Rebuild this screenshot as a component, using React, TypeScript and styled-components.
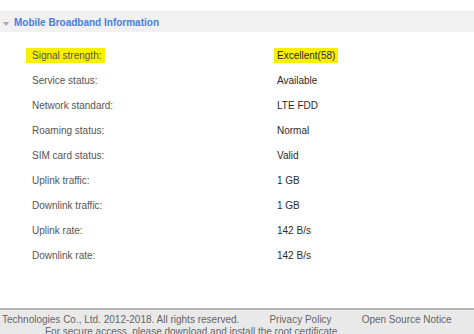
import React from 'react';
import styled, { createGlobalStyle } from 'styled-components';

const rows: [string, string][] = [
  ['Signal strength:', 'Excellent(58)'],
  ['Service status:', 'Available'],
  ['Network standard:', 'LTE FDD'],
  ['Roaming status:', 'Normal'],
  ['SIM card status:', 'Valid'],
  ['Uplink traffic:', '1 GB'],
  ['Downlink traffic:', '1 GB'],
  ['Uplink rate:', '142 B/s'],
  ['Downlink rate:', '142 B/s'],
];

export default function App() {
  return (
    <Page>
      <GlobalStyle />
      <Header>
        <Arrow />
        <Title>Mobile Broadband Information</Title>
      </Header>
      <InfoList>
        {rows.map(([label, value], i) => (
          <Row key={label}>
            <Label>
              <Mark $on={i === 0} $pad={6}>{label}</Mark>
            </Label>
            <Value>
              <Mark $on={i === 0} $pad={3}>{value}</Mark>
            </Value>
          </Row>
        ))}
      </InfoList>
      <Footer>
        <FooterLine>
          <span>Technologies Co., Ltd. 2012-2018. All rights reserved.</span>
          <span>Privacy Policy</span>
          <span>Open Source Notice</span>
        </FooterLine>
        <Notice>For secure access, please download and install the root certificate.</Notice>
      </Footer>
    </Page>
  );
}

const GlobalStyle = createGlobalStyle`
  html, body {
    margin: 0;
    padding: 0;
    background: #fff;
    overflow: hidden;
  }
  body {
    font-family: "Liberation Sans", Arial, sans-serif;
  }
`;

const Page = styled.div`
  width: 474px;
  height: 334px;
  overflow: hidden;
  display: flex;
  flex-direction: column;
  padding-top: 11px;
  box-sizing: border-box;
`;

const Header = styled.div`
  height: 21px;
  flex-shrink: 0;
  background: #f1f1f1;
  display: flex;
  align-items: center;
  padding-left: 3px;
  gap: 5px;
`;

const Arrow = styled.span`
  width: 0;
  height: 0;
  margin-top: 4px;
  border-left: 3px solid transparent;
  border-right: 3px solid transparent;
  border-top: 4px solid #a8a8a8;
`;

const Title = styled.span`
  font-size: 10px;
  font-weight: bold;
  color: #4a7ddd;
  margin-top: 1px;
`;

const InfoList = styled.div`
  padding-top: 11px;
  display: flex;
  flex-direction: column;
  flex-shrink: 0;
`;

const Row = styled.div`
  height: 25px;
  display: grid;
  grid-template-columns: 245px 1fr;
  align-items: center;
  padding-left: 32px;
  font-size: 10px;
`;

const Label = styled.div`
  color: #555;
`;

const Value = styled.div`
  color: #2a2a2a;
`;

const Mark = styled.span<{ $on: boolean; $pad: number }>`
  ${({ $on, $pad }) =>
    $on &&
    `
    background: #f8f000;
    margin-left: -${$pad}px;
    padding: 2px 3px 2px ${$pad}px;
  `}
`;

const Footer = styled.div`
  margin-top: 40px;
  flex-shrink: 0;
  border-top: 2px solid #b4b4b4;
  background: #e9e9e9;
  padding-top: 4px;
  font-size: 10px;
  color: #666;
`;

const FooterLine = styled.div`
  display: flex;
  gap: 30px;
  padding-left: 2px;
  line-height: 12px;
  white-space: nowrap;
`;

const Notice = styled.div`
  padding-left: 45px;
  line-height: 12px;
  white-space: nowrap;
`;
